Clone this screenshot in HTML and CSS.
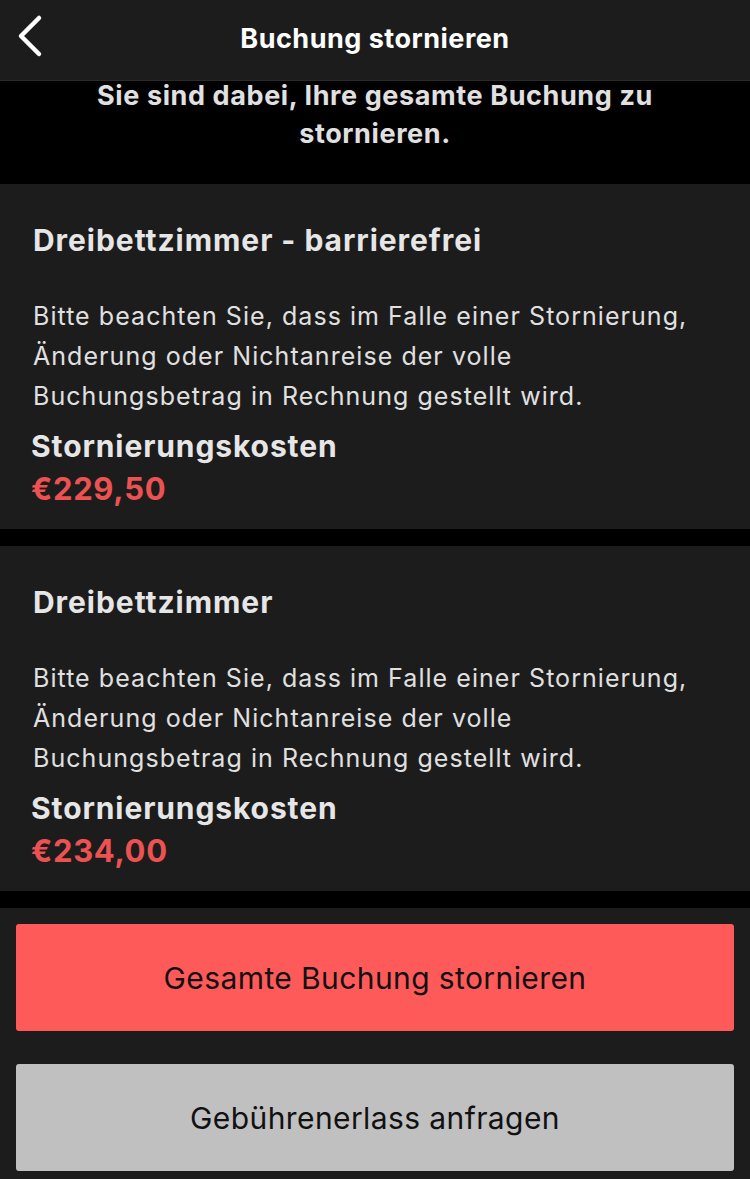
FILE: index.html
```html
<!DOCTYPE html>
<html lang="de">
<head>
<meta charset="utf-8">
<title>Buchung stornieren</title>
<link rel="stylesheet" href="styles.css">
</head>
<body>
<div class="screen">
  <header class="topbar">
    <button class="back" aria-label="Zurück">
      <svg width="30" height="44" viewBox="0 0 30 44"><polyline points="24,4 6,22 24,40" fill="none" stroke="#fff" stroke-width="4.5" stroke-linecap="round" stroke-linejoin="round"/></svg>
    </button>
    <h1 class="title">Buchung stornieren</h1>
  </header>
  <div class="intro">Sie sind dabei, Ihre gesamte Buchung zu stornieren.</div>
  <section class="card">
    <h2 class="room">Dreibettzimmer - barrierefrei</h2>
    <p class="note">Bitte beachten Sie, dass im Falle einer Stornierung, Änderung oder Nichtanreise der volle Buchungsbetrag in Rechnung gestellt wird.</p>
    <div class="cost-label">Stornierungskosten</div>
    <div class="price">€229,50</div>
  </section>
  <section class="card">
    <h2 class="room">Dreibettzimmer</h2>
    <p class="note">Bitte beachten Sie, dass im Falle einer Stornierung, Änderung oder Nichtanreise der volle Buchungsbetrag in Rechnung gestellt wird.</p>
    <div class="cost-label">Stornierungskosten</div>
    <div class="price">€234,00</div>
  </section>
  <footer class="actions">
    <button class="btn btn-red">Gesamte Buchung stornieren</button>
    <button class="btn btn-grey">Gebührenerlass anfragen</button>
  </footer>
</div>
</body>
</html>
```

FILE: styles.css
```css
* { box-sizing: border-box; }
html, body { margin: 0; padding: 0; background: #000; }
body { font-family: Inter, Roboto, "Noto Sans", "Liberation Sans", sans-serif; }
.screen { width: 750px; height: 1179px; background: #000; overflow: hidden; }
.topbar {
  height: 81px;
  background: #1c1c1c;
  border-bottom: 1px solid #2a2a2a;
  display: flex;
  align-items: center;
  justify-content: center;
  position: relative;
}
.back {
  position: absolute;
  left: 12px;
  top: 14px;
  background: none;
  border: 0;
  padding: 0;
  width: 36px;
  height: 44px;
  display: flex;
  align-items: center;
  justify-content: center;
}
.title {
  margin: 0;
  margin-top: -4px;
  color: #fff;
  font-size: 27px;
  font-weight: 700;
  letter-spacing: 0.5px;
}
.intro {
  height: 107px;
  margin-top: -4px;
  padding: 0 40px;
  color: #e0e0e0;
  font-size: 27px;
  font-weight: 700;
  line-height: 38px;
  letter-spacing: 0.6px;
  text-align: center;
}
.card {
  background: #1c1c1c;
  height: 345px;
  padding: 38px 33px 0;
  margin-bottom: 17px;
}
.room {
  margin: 0;
  color: #e6e6e6;
  font-size: 30px;
  font-weight: 700;
  line-height: 36px;
  letter-spacing: 0.95px;
}
.note {
  margin: 38px 0 0;
  color: #e0e0e0;
  font-size: 25px;
  font-weight: 400;
  line-height: 40px;
  letter-spacing: 1.05px;
  width: 680px;
}
.cost-label {
  margin-top: 10px;
  margin-left: -2px;
  color: #e6e6e6;
  font-size: 30px;
  font-weight: 700;
  line-height: 40px;
  letter-spacing: 0.9px;
}
.price {
  margin-left: -2px;
  color: #ec5252;
  font-size: 31px;
  font-weight: 700;
  line-height: 46px;
  letter-spacing: 0.7px;
}
.actions {
  background: #1c1c1c;
  height: 271px;
  padding: 16px 16px 0;
  display: flex;
  flex-direction: column;
  gap: 33px;
}
.btn {
  height: 107px;
  width: 100%;
  border: 0;
  border-radius: 3px;
  font-family: inherit;
  font-size: 30px;
  font-weight: 400;
  letter-spacing: 0.4px;
  color: #111;
}
.btn-red { background: #ff5a5a; }
.btn-grey { background: #c0c0c0; }
```
